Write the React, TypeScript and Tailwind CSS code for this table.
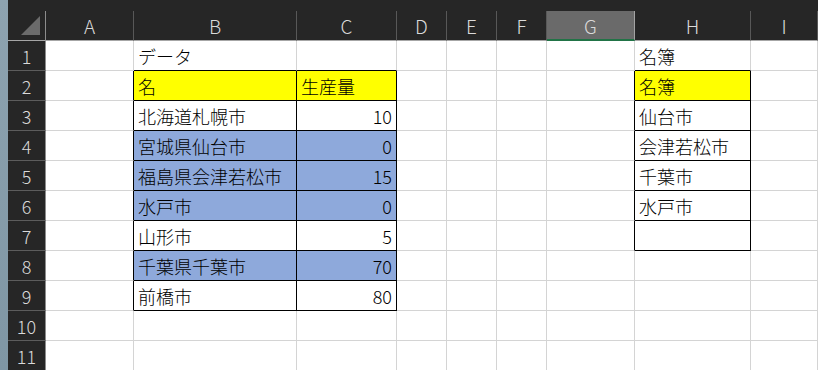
type Fill = 'yellow' | 'blue';
type Cell = { text: string; right?: boolean; fill?: Fill };

const columns = ['A', 'B', 'C', 'D', 'E', 'F', 'G', 'H', 'I'];
const rows = [1, 2, 3, 4, 5, 6, 7, 8, 9, 10, 11];

const sheet: Record<string, Cell> = {
  B1: { text: 'データ' },
  B2: { text: '名', fill: 'yellow' },
  C2: { text: '生産量', fill: 'yellow' },
  B3: { text: '北海道札幌市' },
  C3: { text: '10', right: true },
  B4: { text: '宮城県仙台市', fill: 'blue' },
  C4: { text: '0', right: true, fill: 'blue' },
  B5: { text: '福島県会津若松市', fill: 'blue' },
  C5: { text: '15', right: true, fill: 'blue' },
  B6: { text: '水戸市', fill: 'blue' },
  C6: { text: '0', right: true, fill: 'blue' },
  B7: { text: '山形市' },
  C7: { text: '5', right: true },
  B8: { text: '千葉県千葉市', fill: 'blue' },
  C8: { text: '70', right: true, fill: 'blue' },
  B9: { text: '前橋市' },
  C9: { text: '80', right: true },
  H1: { text: '名簿' },
  H2: { text: '名簿', fill: 'yellow' },
  H3: { text: '仙台市' },
  H4: { text: '会津若松市' },
  H5: { text: '千葉市' },
  H6: { text: '水戸市' },
};

// ranges that carry thin black outlines
const inTable = (col: string, row: number) =>
  ((col === 'B' || col === 'C') && row >= 2 && row <= 9) ||
  (col === 'H' && row >= 2 && row <= 7);

const SelectAll = () => (
  <div className="relative h-full border-r border-r-[#8c8c8c] border-b border-b-[#a6a6a6] bg-[#262626]">
    <svg width="24" height="24" viewBox="0 0 24 24" className="absolute right-[3px] bottom-[3px]">
      <polygon points="22,3 22,22 3,22" fill="#6b6b6b" />
    </svg>
  </div>
);

const ColumnHeader = ({ name }: { name: string }) => {
  const active = name === 'G';
  return (
    <div
      className={`flex items-center justify-center border-b border-r text-[19px] font-light text-[#dadada] ${
        active
          ? 'bg-[#6a6a6a] border-r-[#a3a3a3] border-b-[2px] border-b-[#217346]'
          : 'bg-[#262626] border-r-[#585858] border-b-[#a6a6a6]'
      }`}
    >
      {name}
    </div>
  );
};

const GridCell = ({ col, row }: { col: string; row: number }) => {
  const idx = columns.indexOf(col);
  const next = columns[idx + 1];
  const cell = sheet[`${col}${row}`];
  const darkRight = inTable(col, row) || (next !== undefined && inTable(next, row));
  const darkBottom = inTable(col, row) || inTable(col, row + 1);
  const fill =
    cell?.fill === 'yellow' ? 'bg-[#ffff00]' : cell?.fill === 'blue' ? 'bg-[#8ea9db]' : 'bg-white';

  return (
    <div
      className={`flex items-center whitespace-nowrap border-r border-b px-[4px] pt-[1px] text-[18px] font-light text-black ${fill} ${
        darkRight ? 'border-r-black' : 'border-r-[#d4d4d4]'
      } ${darkBottom ? 'border-b-black' : 'border-b-[#d4d4d4]'} ${
        cell?.right ? 'justify-end' : 'justify-start'
      }`}
    >
      {cell?.text}
    </div>
  );
};

export default function App() {
  return (
    <div className="flex h-[370px] w-[818px] overflow-hidden bg-white font-['Noto_Sans_CJK_JP','Liberation_Sans',sans-serif] leading-none">
      <div className="h-full w-[8px] shrink-0 bg-gradient-to-b from-[#8ea3b0] to-[#7f96a4]" />
      <div className="flex min-w-0 flex-1 flex-col">
        <div className="h-[11px] shrink-0 bg-[#262626]" />
        <div className="grid grid-cols-[38px_88px_163px_100px_50px_50px_50px_88px_116px_1fr] auto-rows-[30px]">
          <SelectAll />
          {columns.map((c) => (
            <ColumnHeader key={c} name={c} />
          ))}
          {rows.map((r) => (
            <div key={r} className="contents">
              <div className="flex items-center justify-center border-r border-r-[#8c8c8c] border-b border-b-[#5c5c5c] bg-[#262626] pt-[1px] text-[18px] font-light text-[#dadada]">
                {r}
              </div>
              {columns.map((c) => (
                <GridCell key={c} col={c} row={r} />
              ))}
            </div>
          ))}
        </div>
      </div>
    </div>
  );
}
